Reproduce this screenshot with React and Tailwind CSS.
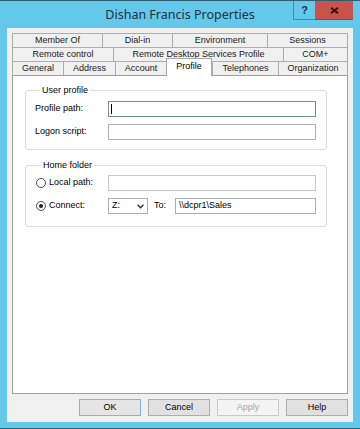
import React from "react";

const F = { fontFamily: '"Liberation Sans", Arial, sans-serif' };

function Tab({ label, w, last, active }) {
  if (active) {
    return (
      <div
        className="relative z-10 -mt-[3px] -mb-px flex h-[18px] items-start justify-center border-l border-t border-r border-[#a9a9a9] bg-white pt-[1px] text-[9px] text-black"
        style={{ width: w }}
      >
        {label}
      </div>
    );
  }
  return (
    <div
      className={
        "flex h-[14px] items-center justify-center border-l border-t border-[#adadad] bg-[#f0f0f0] text-[9px] text-[#1a1a1a] " +
        (last ? "flex-1 border-r" : "")
      }
      style={last ? undefined : { width: w }}
    >
      {label}
    </div>
  );
}

function Radio({ checked }) {
  return (
    <span className="flex h-[10px] w-[10px] items-center justify-center rounded-full border border-[#4d4d4d] bg-white">
      {checked && <span className="h-[4px] w-[4px] rounded-full bg-[#222]" />}
    </span>
  );
}

export default function App() {
  return (
    <div
      className="flex h-[429px] w-[360px] flex-col border-t border-b border-[#2f5d70] bg-[#63c8ea]"
      style={F}
    >
      {/* title bar */}
      <div className="relative flex h-[27px] items-center justify-center">
        <span
          className="pt-[1px] text-[12.5px] text-[#1c3248]"
          style={{ fontFamily: '"Noto Sans", "Open Sans", sans-serif' }}
        >
          Dishan Francis Properties
        </span>
        <div className="absolute right-[7px] top-0 flex h-[19px]">
          <div className="flex w-[22px] items-center justify-center border-l border-b border-[#3b8fae] bg-[#63c8ea] text-[11px] font-bold text-[#14304c]">
            ?
          </div>
          <div className="flex w-[38px] items-center justify-center border-b border-[#a23d38] bg-[#c9524d]">
            <svg width="9" height="7" viewBox="0 0 9 7">
              <path d="M1 0.8 L8 6.2 M8 0.8 L1 6.2" stroke="#2a0f0c" strokeWidth="1.9" fill="none" />
            </svg>
          </div>
        </div>
      </div>

      {/* body */}
      <div className="mx-[7px] mb-[6px] flex flex-1 flex-col bg-[#f0f0f0] px-[5px] pt-[5px]">
        {/* tabs */}
        <div className="flex flex-col">
          <div className="flex">
            <Tab label="Member Of" w={90} />
            <Tab label="Dial-in" w={70} />
            <Tab label="Environment" w={95} />
            <Tab label="Sessions" last />
          </div>
          <div className="flex">
            <Tab label="Remote control" w={101} />
            <Tab label="Remote Desktop Services Profile" w={170} />
            <Tab label="COM+" last />
          </div>
          <div className="flex h-[14px] items-start">
            <Tab label="General" w={51} />
            <Tab label="Address" w={52} />
            <Tab label="Account" w={51} />
            <Tab label="Profile" w={46} active />
            <Tab label="Telephones" w={66} />
            <Tab label="Organization" last />
          </div>
        </div>

        {/* panel */}
        <div className="flex flex-1 flex-col border border-[#a0a0a0] bg-white pl-[12px] pr-[20px] text-[9px] text-black">
          <fieldset className="mt-[8px] rounded-[3px] border border-[#dcdcdc] pb-[9px] pl-[9px] pr-[10px] pt-[4px]">
            <legend className="ml-[5px] px-[2px] text-[9px] leading-[13px]">User profile</legend>
            <div className="flex flex-col gap-[7px]">
              <div className="flex h-[16px] items-center">
                <span className="w-[73px]">Profile path:</span>
                <div className="flex h-[16px] flex-1 items-center border border-[#6f8ea6] bg-white pl-[2px]">
                  <span className="h-[10px] w-px bg-black" />
                </div>
              </div>
              <div className="flex h-[16px] items-center">
                <span className="w-[73px]">Logon script:</span>
                <div className="h-[16px] flex-1 border border-[#abadb3] bg-white" />
              </div>
            </div>
          </fieldset>

          <fieldset className="mt-[9px] rounded-[3px] border border-[#dcdcdc] pb-[12px] pl-[10px] pr-[10px] pt-[3px]">
            <legend className="ml-[5px] px-[2px] text-[9px] leading-[13px]">Home folder</legend>
            <div className="flex flex-col gap-[7px]">
              <div className="flex h-[16px] items-center">
                <div className="flex w-[72px] items-center gap-[3px]">
                  <Radio />
                  <span>Local path:</span>
                </div>
                <div className="h-[16px] flex-1 border border-[#c8c8c8] bg-white" />
              </div>
              <div className="flex h-[16px] items-center">
                <div className="flex w-[72px] items-center gap-[3px]">
                  <Radio checked />
                  <span>Connect:</span>
                </div>
                <div className="flex h-[16px] w-[40px] items-center justify-between border border-[#abadb3] bg-white pl-[3px] pr-[3px]">
                  <span>Z:</span>
                  <svg width="7" height="5" viewBox="0 0 7 5">
                    <path d="M0.5 0.8 L3.5 3.8 L6.5 0.8" fill="none" stroke="#333" strokeWidth="1.3" />
                  </svg>
                </div>
                <span className="ml-[6px] w-[21px]">To:</span>
                <div className="flex h-[16px] flex-1 items-center border border-[#abadb3] bg-white pl-[3px]">
                  {"\\\\dcpr1\\Sales"}
                </div>
              </div>
            </div>
          </fieldset>
        </div>

        {/* buttons */}
        <div className="mb-[6px] mt-[5px] flex justify-end gap-[7px] text-[9px]">
          <div className="flex h-[17px] w-[62px] items-center justify-center border border-[#7eb4ea] bg-[#e5e5e5] text-black">
            OK
          </div>
          <div className="flex h-[17px] w-[62px] items-center justify-center border border-[#adadad] bg-[#e1e1e1] text-black">
            Cancel
          </div>
          <div className="flex h-[17px] w-[62px] items-center justify-center border border-[#c8c8c8] bg-[#f4f4f4] text-[#a6a6a6]">
            Apply
          </div>
          <div className="flex h-[17px] w-[62px] items-center justify-center border border-[#adadad] bg-[#e1e1e1] text-black">
            Help
          </div>
        </div>
      </div>
    </div>
  );
}
